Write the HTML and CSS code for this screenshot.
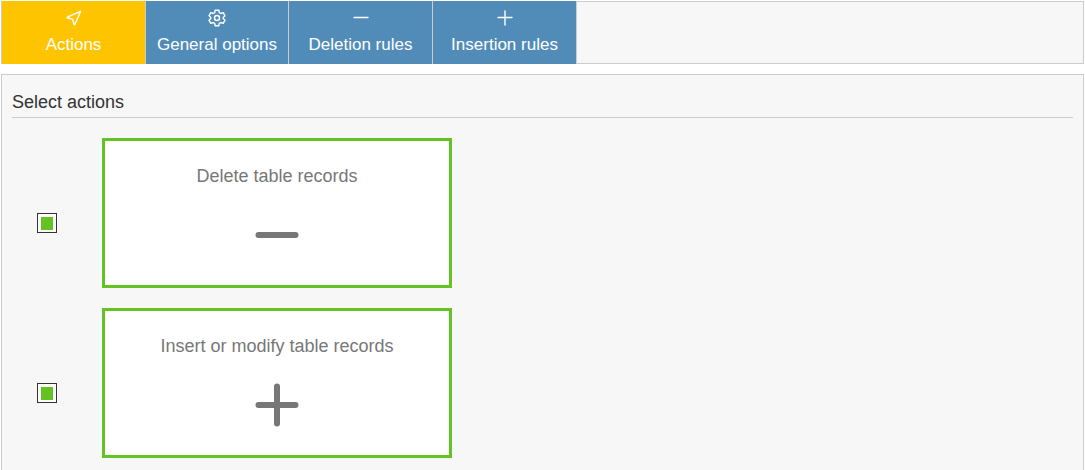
FILE: index.html
```html
<!DOCTYPE html>
<html lang="en">
<head>
<meta charset="utf-8">
<meta name="viewport" content="width=device-width, initial-scale=1">
<title>Select actions</title>
<link rel="stylesheet" href="styles.css">
</head>
<body>
<nav class="tabs">
  <button type="button" class="tab tab-active" aria-current="page">
    <svg class="tab-icon" viewBox="0 0 18 18" aria-hidden="true"><path d="M15.600 2.400 2.300 8.200Q1.600 8.700 2.400 9L6.600 9.900Q7.500 10.100 7.900 11L9 15.200Q9.500 16.200 10 15.200z"/></svg>
    <span>Actions</span>
  </button>
  <button type="button" class="tab">
    <svg class="tab-icon" viewBox="0 0 18 18" aria-hidden="true"><path d="M7.2 1.2h3.6l.5 2.4 1.6.9 2.3-.8 1.8 3.1-1.8 1.6v1.2l1.8 1.6-1.8 3.1-2.3-.8-1.6.9-.5 2.4H7.2l-.5-2.4-1.6-.9-2.3.8L1 11.200l1.800-1.600V8.400L1 6.800l1.800-3.100 2.300.8 1.600-.9z"/><circle cx="9" cy="9" r="2.500"/></svg>
    <span>General options</span>
  </button>
  <button type="button" class="tab">
    <svg class="tab-icon" viewBox="0 0 18 18" aria-hidden="true"><path d="M2 8.500h14"/></svg>
    <span>Deletion rules</span>
  </button>
  <button type="button" class="tab">
    <svg class="tab-icon" viewBox="0 0 18 18" aria-hidden="true"><path d="M2 8.500h14M9 2v14"/></svg>
    <span>Insertion rules</span>
  </button>
</nav>
<main class="panel">
  <h1 class="title">Select actions</h1>
  <div class="actions">
    <div class="action">
      <input class="check" type="checkbox" id="delete-records" checked>
      <label class="card" for="delete-records">
        <span>Delete table records</span>
        <svg class="card-icon" viewBox="0 0 50 50" aria-hidden="true"><path d="M6.500 25h37"/></svg>
      </label>
    </div>
    <div class="action">
      <input class="check" type="checkbox" id="insert-records" checked>
      <label class="card" for="insert-records">
        <span>Insert or modify table records</span>
        <svg class="card-icon" viewBox="0 0 50 50" aria-hidden="true"><path d="M6.500 25h37M25 6.500v37"/></svg>
      </label>
    </div>
  </div>
</main>
</body>
</html>
```
FILE: styles.css
```css
* { box-sizing: border-box; }

body {
  margin: 0;
  padding: 1px 1px 0;
  min-height: 100vh;
  display: flex;
  flex-direction: column;
  gap: 10px;
  background: #fff;
  color: #333;
  font-family: "Liberation Sans", Arial, sans-serif;
  font-size: 18px;
  line-height: 20px;
}

.tabs {
  display: grid;
  grid-template-columns: 144px 143px 144px 144px 1fr;
  border-left: 1px solid #ccc;
}

.tabs::after {
  content: "";
  border: 1px solid #ccc;
  border-left: 0;
  background: #f7f7f7;
}

.tab {
  padding: 8px 0 9px;
  display: flex;
  flex-direction: column;
  align-items: center;
  gap: 8px;
  border: 0;
  border-right: 1px solid #ccc;
  background: #518cb8;
  color: #fff;
  font: inherit;
  font-size: 17px;
  white-space: nowrap;
  cursor: pointer;
}

.tab-active { background: #ffc400; }

.tab-icon {
  width: 18px;
  height: 18px;
  fill: none;
  stroke: currentColor;
  stroke-width: 1.4;
  stroke-linecap: round;
  stroke-linejoin: round;
}

.panel {
  flex: 1;
  padding: 17px 10px 12px;
  border: 1px solid #ccc;
  border-bottom: 0;
  background: #f7f7f7;
}

.title {
  margin: 0;
  padding-bottom: 5px;
  border-bottom: 1px solid #ccc;
  font-size: 18px;
  font-weight: 400;
}

.actions {
  display: grid;
  gap: 20px;
  padding-top: 20px;
}

.action {
  display: grid;
  grid-template-columns: 65px minmax(0, 350px);
  padding-left: 25px;
}

.check {
  appearance: none;
  width: 20px;
  height: 20px;
  margin: 75px 0 0;
  border: 1px solid #333;
  background: #fff;
}

.check:checked {
  background: linear-gradient(#62c322, #62c322) 3px 3px / 12px 13px no-repeat #fff;
}

.card {
  min-height: 150px;
  padding: 25px 10px;
  display: flex;
  flex-direction: column;
  align-items: center;
  gap: 24px;
  border: 3px solid #62c322;
  background: #fff;
  color: #777;
  text-align: center;
  cursor: pointer;
}

.card-icon {
  width: 50px;
  height: 50px;
  fill: none;
  stroke: currentColor;
  stroke-width: 6;
  stroke-linecap: round;
}
```
